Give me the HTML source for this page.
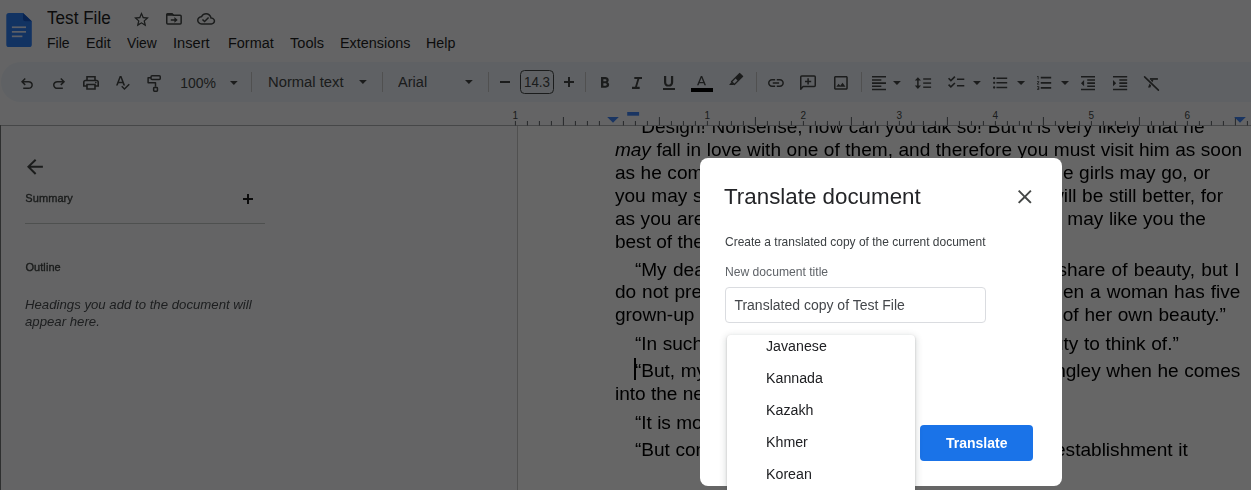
<!DOCTYPE html>
<html lang="en"><head><meta charset="utf-8"><title>Test File - Google Docs</title>
<style>
html,body{margin:0;padding:0}
body{width:1251px;height:490px;overflow:hidden;position:relative;background:#f9fbfd;font-family:"Liberation Sans",sans-serif;}
.t{position:absolute;white-space:pre;transform-origin:0 50%}
.ic{position:absolute;display:block;overflow:visible}
.abs{position:absolute}
.sep{position:absolute;width:1px;height:20px;top:72px;background:#c7c7c7}
.doc{position:absolute;color:#000;font-size:19.07px;line-height:23px;text-align:justify;text-align-last:justify;white-space:normal}
</style></head><body>

<svg class="abs" style="left:6px;top:13px;width:26px;height:34px" viewBox="0 0 26 34"><path d="M2.900 0H17l8.800 8.300V31.400a2.600 2.600 0 0 1-2.600 2.600H2.900A2.600 2.600 0 0 1 .3 31.400V2.600A2.600 2.600 0 0 1 2.900 0z" fill="#2f7ff6"/><path d="M17 0l8.800 8.300H19.300A2.300 2.300 0 0 1 17 6z" fill="#1659c8"/><rect x="5.900" y="13.400" width="14.100" height="1.700" fill="#e6eeff"/><rect x="5.900" y="18" width="14.100" height="1.700" fill="#e6eeff"/><rect x="5.900" y="22.500" width="10.500" height="1.700" fill="#e6eeff"/></svg>
<div class="t" style="left:46.50px;top:8px;font-size:17.5px;line-height:21px;color:#1f1f1f;font-weight:400;font-style:normal;transform:scaleX(0.978);">Test File</div>
<svg class="ic" style="left:134.30px;top:11.50px;width:15.00px;height:14.40px" viewBox="2 2 20 19" preserveAspectRatio="none" fill="#444746"><path d="M22 9.240l-7.190-.62L12 2 9.190 8.630 2 9.240l5.460 4.730L5.820 21 12 17.270 18.180 21l-1.630-7.030L22 9.240zM12 15.400l-3.760 2.270 1-4.280-3.320-2.880 4.380-.38L12 6.100l1.710 4.040 4.380.38-3.320 2.880 1 4.280L12 15.400z"/><path d="M12 4.200l2.250 5.300 5.750.5-4.350 3.800 1.300 5.600L12 16.400l-4.950 3 1.300-5.600L4 10l5.750-.5z" fill="none" stroke="#444746" stroke-width=".5"/></svg>
<svg class="ic" style="left:164px;top:11px;width:20px;height:16px" viewBox="164 11 20 16" fill="#444746"><path d="M166.750 23V14.750a1 1 0 0 1 1-1h4.300l1.600 1.600h6.500a1 1 0 0 1 1 1V23a1 1 0 0 1-1 1H167.750a1 1 0 0 1-1-1z" fill="none" stroke="#444746" stroke-width="1.500" stroke-linejoin="round"/><path d="M166.400 15.800V14.300a.8.800 0 0 1 .8-.8h5.100l2 2.300z"/><path d="M170.800 19.150h3.600v-2.100l3.300 2.850-3.300 2.850v-2.100h-3.600z"/></svg>
<svg class="ic" style="left:197.00px;top:13.00px;width:18.20px;height:11.70px" viewBox="0 4 24 16" preserveAspectRatio="none" fill="#444746"><path d="M19.350 10.040C18.670 6.590 15.640 4 12 4 9.110 4 6.600 5.640 5.350 8.040 2.340 8.360 0 10.910 0 14c0 3.310 2.690 6 6 6h13c2.760 0 5-2.240 5-5 0-2.640-2.050-4.780-4.650-4.960zM19 18H6c-2.210 0-4-1.790-4-4 0-2.050 1.530-3.760 3.560-3.970l1.070-.11.5-.95C8.080 7.140 9.940 6 12 6c2.620 0 4.880 1.860 5.390 4.430l.3 1.500 1.530.11c1.560.1 2.780 1.410 2.780 2.960 0 1.650-1.350 3-3 3zm-9-3.820l-2.090-2.090L6.500 13.500 10 17l6.010-6.010-1.410-1.410z"/></svg>
<div class="t" style="left:47.00px;top:35px;font-size:14px;line-height:17px;color:#1f1f1f;font-weight:400;font-style:normal;">File</div>
<div class="t" style="left:85.90px;top:35px;font-size:14px;line-height:17px;color:#1f1f1f;font-weight:400;font-style:normal;transform:scaleX(1.02);">Edit</div>
<div class="t" style="left:127.30px;top:35px;font-size:14px;line-height:17px;color:#1f1f1f;font-weight:400;font-style:normal;transform:scaleX(0.985);">View</div>
<div class="t" style="left:173.20px;top:35px;font-size:14px;line-height:17px;color:#1f1f1f;font-weight:400;font-style:normal;transform:scaleX(1.045);">Insert</div>
<div class="t" style="left:227.60px;top:35px;font-size:14px;line-height:17px;color:#1f1f1f;font-weight:400;font-style:normal;transform:scaleX(1.03);">Format</div>
<div class="t" style="left:289.70px;top:35px;font-size:14px;line-height:17px;color:#1f1f1f;font-weight:400;font-style:normal;transform:scaleX(1.04);">Tools</div>
<div class="t" style="left:339.90px;top:35px;font-size:14px;line-height:17px;color:#1f1f1f;font-weight:400;font-style:normal;transform:scaleX(1.028);">Extensions</div>
<div class="t" style="left:426.00px;top:35px;font-size:14px;line-height:17px;color:#1f1f1f;font-weight:400;font-style:normal;transform:scaleX(1.02);">Help</div>
<div class="abs" style="left:1px;top:62px;width:1300px;height:40px;border-radius:20px;background:#edf2fa"></div>
<svg class="ic" style="left:21.10px;top:77.90px;width:11.90px;height:11.10px" viewBox="4 4 16 15" preserveAspectRatio="none" fill="#444746"><path d="M7 19v-2h7.1q1.575 0 2.738-1T18 13.5 16.838 11 14.1 10H7.8l2.6 2.6L9 14 4 9l5-5 1.4 1.4L7.8 8h6.3q2.425 0 4.163 1.575T20 13.5t-1.737 3.925T14.1 19z"/></svg>
<svg class="ic" style="left:52.90px;top:77.90px;width:12.10px;height:11.10px" viewBox="4 4 16 15" preserveAspectRatio="none" fill="#444746"><path d="M9.9 19q-2.425 0-4.163-1.575T4 13.5t1.737-3.925T9.9 8h6.3l-2.6-2.6L15 4l5 5-5 5-1.4-1.4 2.6-2.6H9.9q-1.575 0-2.738 1T6 13.5 7.162 16 9.9 17H17v2z"/></svg>
<svg class="ic" style="left:82.90px;top:76.00px;width:16.00px;height:13.80px" viewBox="2 3 20 18" preserveAspectRatio="none" fill="#444746"><path d="M16 8V5H8v3H6V3h12v5zM18 12.500q.425 0 .713-.288T19 11.500t-.288-.712T18 10.500t-.712.288-.288.712.288.712.712.288M16 19v-4H8v4zm2 2H6v-4H2v-6q0-1.275.875-2.137T5 8h14q1.275 0 2.138.863T22 11v6h-4zm2-6v-4q0-.425-.288-.712T19 10H5q-.425 0-.712.288T4 11v4h2v-2h12v2z"/></svg>
<svg class="ic" style="left:116.00px;top:75.50px;width:13.80px;height:14.00px" viewBox="3 3 18.15 19" preserveAspectRatio="none" fill="#444746"><path d="M14.1 22l-4.25-4.25 1.4-1.4 2.85 2.85 5.65-5.65 1.4 1.4zM3 16L7.850 3h2.350L15.050 16h-2.300l-1.150-3.300H6.350L5.200 16zm4.050-5.200h3.900l-1.900-5.400h-.1z"/></svg>
<svg class="ic" style="left:146px;top:73px;width:17px;height:21px" viewBox="146 73 17 21" fill="#444746"><g fill="none" stroke="#444746" stroke-width="1.500" stroke-linejoin="round"><rect x="151.050" y="75.750" width="9.200" height="3.800" rx="1"/><path d="M151 77.650h-2.900v5.150h7.400v3.900"/><rect x="153.650" y="87.450" width="3.800" height="3.800" rx=".7"/></g></svg>
<div class="t" style="left:180.20px;top:75px;font-size:14px;line-height:17px;color:#444746;font-weight:400;font-style:normal;">100%</div>
<svg class="ic" style="left:230.10px;top:81.00px;width:7.70px;height:4.00px" viewBox="7 10 10 5" preserveAspectRatio="none" fill="#444746"><path d="M7 10l5 5 5-5z"/></svg>
<svg class="ic" style="left:359.10px;top:80.00px;width:7.80px;height:3.90px" viewBox="7 10 10 5" preserveAspectRatio="none" fill="#444746"><path d="M7 10l5 5 5-5z"/></svg>
<svg class="ic" style="left:465.20px;top:80.00px;width:7.80px;height:3.90px" viewBox="7 10 10 5" preserveAspectRatio="none" fill="#444746"><path d="M7 10l5 5 5-5z"/></svg>
<svg class="ic" style="left:893.20px;top:80.90px;width:7.90px;height:4.10px" viewBox="7 10 10 5" preserveAspectRatio="none" fill="#444746"><path d="M7 10l5 5 5-5z"/></svg>
<svg class="ic" style="left:973.00px;top:80.90px;width:7.90px;height:4.10px" viewBox="7 10 10 5" preserveAspectRatio="none" fill="#444746"><path d="M7 10l5 5 5-5z"/></svg>
<svg class="ic" style="left:1016.90px;top:80.90px;width:8.10px;height:4.10px" viewBox="7 10 10 5" preserveAspectRatio="none" fill="#444746"><path d="M7 10l5 5 5-5z"/></svg>
<svg class="ic" style="left:1060.90px;top:80.90px;width:8.00px;height:4.10px" viewBox="7 10 10 5" preserveAspectRatio="none" fill="#444746"><path d="M7 10l5 5 5-5z"/></svg>
<div class="sep" style="left:251.0px"></div>
<div class="sep" style="left:382.1px"></div>
<div class="sep" style="left:487.9px"></div>
<div class="sep" style="left:585.0px"></div>
<div class="sep" style="left:756.0px"></div>
<div class="sep" style="left:860.9px"></div>
<div class="t" style="left:267.60px;top:74px;font-size:14px;line-height:17px;color:#444746;font-weight:400;font-style:normal;transform:scaleX(1.055);">Normal text</div>
<div class="t" style="left:398.30px;top:74px;font-size:14px;line-height:17px;color:#444746;font-weight:400;font-style:normal;transform:scaleX(1.04);">Arial</div>
<div class="abs" style="left:500px;top:81.100px;width:10.100px;height:1.700px;background:#444746"></div>
<div class="abs" style="left:520px;top:70px;width:32px;height:22px;border:1px solid #444746;border-radius:4.500px"></div>
<div class="t" style="left:524.30px;top:74px;font-size:14px;line-height:17px;color:#444746;font-weight:400;font-style:normal;transform:scaleX(0.955);">14.3</div>
<div class="abs" style="left:563.900px;top:81.100px;width:10.100px;height:1.700px;background:#444746"></div>
<div class="abs" style="left:568.100px;top:76.900px;width:1.700px;height:10.100px;background:#444746"></div>
<svg class="ic" style="left:600.85px;top:77.00px;width:8.15px;height:10.80px" viewBox="6.8 5 10.4 14" preserveAspectRatio="none" fill="#444746"><path d="M6.800 19V5h5.525q1.625 0 3 1T16.700 8.775q0 1.275-.575 1.963t-1.075.987q.625.275 1.388 1.025T17.200 15q0 2.225-1.625 3.113T12.525 19zm3.025-2.800h2.600q1.200 0 1.463-.612t.262-.888-.262-.887-1.538-.613H9.825zm0-5.700h2.325q.825 0 1.200-.425t.375-.950q0-.600-.425-.975t-1.100-.375H9.825z"/></svg>
<svg class="ic" style="left:632.00px;top:77.00px;width:10.00px;height:11.90px" viewBox="5 5 13 14" preserveAspectRatio="none" fill="#444746"><path d="M5 19v-2.500h4l3-9H8V5h10v2.500h-3.500l-3 9H15V19z"/></svg>
<svg class="ic" style="left:664.20px;top:76.10px;width:9.20px;height:10.60px" viewBox="6.675 3 10.65 14" preserveAspectRatio="none" fill="#444746"><path d="M12 17q-2.525 0-3.925-1.575T6.675 11.250V3H9.250v8.400q0 1.400.7 2.275T12 14.550t2.050-.875.700-2.275V3h2.575v8.250q0 2.600-1.400 4.175T12 17z"/></svg>
<div class="abs" style="left:663px;top:88.400px;width:11.800px;height:1.400px;background:#444746"></div>
<svg class="ic" style="left:697.40px;top:75.50px;width:9.00px;height:9.30px" viewBox="5.5 3 12.99 14" preserveAspectRatio="none" fill="#444746"><path d="M11 3L5.500 17h2.250l1.120-3h6.250l1.120 3h2.250L13 3h-2zm-1.380 9L12 5.670 14.380 12H9.620z"/></svg>
<div class="abs" style="left:691px;top:88px;width:22px;height:4px;background:#000"></div>
<svg class="ic" style="left:727px;top:71px;width:18px;height:16px" viewBox="727 71 18 16" fill="#444746"><g transform="translate(737.300 78.800) rotate(-45)"><path fill-rule="evenodd" d="M-6.200 -2.700H5.500a.5.500 0 0 1 .5.500v4.400a.5.500 0 0 1-.5.500H-6.200a.5.500 0 0 1-.5-.5v-4.400a.5.500 0 0 1 .5-.5zM-5.400 -1.400v2.800h4.300v-2.800z"/></g><path d="M729.100 84.900l2.300-2.900 3.100 2.900z"/></svg>
<svg class="ic" style="left:768.10px;top:78.90px;width:15.90px;height:8.00px" viewBox="2 7 20 10" preserveAspectRatio="none" fill="#444746"><path d="M3.900 12c0-1.710 1.390-3.100 3.100-3.100h4V7H7c-2.760 0-5 2.240-5 5s2.240 5 5 5h4v-1.900H7c-1.710 0-3.100-1.390-3.100-3.100zM8 13h8v-2H8v2zm9-6h-4v1.900h4c1.710 0 3.100 1.390 3.100 3.100s-1.390 3.100-3.100 3.100h-4V17h4c2.760 0 5-2.240 5-5s-2.240-5-5-5z"/></svg>
<svg class="ic" style="left:799px;top:74px;width:18px;height:17px" viewBox="799 74 18 17" fill="#444746"><path d="M800.750 89.300V76.950a1 1 0 0 1 1-1h12.500a1 1 0 0 1 1 1v8.600a1 1 0 0 1-1 1H803.100z" fill="none" stroke="#444746" stroke-width="1.500" stroke-linejoin="round"/><path d="M805 80.650h2.350V78.300h1.500v2.350h2.350v1.500h-2.350v2.350h-1.500v-2.350H805z"/></svg>
<svg class="ic" style="left:834.10px;top:76.10px;width:13.80px;height:13.70px" viewBox="3 3 18 18" preserveAspectRatio="none" fill="#444746"><path d="M19 5v14H5V5h14m0-2H5c-1.100 0-2 .9-2 2v14c0 1.100.9 2 2 2h14c1.100 0 2-.9 2-2V5c0-1.100-.9-2-2-2zm-4.860 8.860l-3 3.870L9 13.140 6 17h12l-3.860-5.140z"/></svg>
<svg class="ic" style="left:872.00px;top:75.80px;width:14.00px;height:14.30px" viewBox="3 3 18 18" preserveAspectRatio="none" fill="#444746"><path d="M15 15H3v2h12v-2zm0-8H3v2h12V7zM3 13h18v-2H3v2zm0 8h18v-2H3v2zM3 3v2h18V3H3z"/></svg>
<svg class="ic" style="left:914px;top:76px;width:18px;height:14px" viewBox="914 76 18 14" fill="#444746"><path d="M917.900 77.200l3.100 3.300h-2.350v5.100h2.350l-3.100 3.300-3.100-3.300h2.350v-5.100h-2.350z"/><rect x="923.200" y="78.300" width="7.900" height="1.400"/><rect x="923.200" y="82.400" width="7.900" height="1.400"/><rect x="923.200" y="86.500" width="7.900" height="1.400"/></svg>
<svg class="ic" style="left:947.80px;top:76.30px;width:16.30px;height:12.10px" viewBox="2 3.93 20 15.07" preserveAspectRatio="none" fill="#444746"><path d="M22 7h-9v2h9V7zm0 8h-9v2h9v-2zM5.540 11L2 7.460l1.410-1.410 2.120 2.120 4.240-4.240 1.410 1.410L5.540 11zm0 8L2 15.460l1.410-1.410 2.120 2.120 4.240-4.240 1.410 1.410L5.540 19z"/></svg>
<svg class="ic" style="left:992.80px;top:77.20px;width:14.20px;height:11.70px" viewBox="2.5 4.5 18.5 15" preserveAspectRatio="none" fill="#444746"><path d="M4 10.500c-.83 0-1.500.67-1.500 1.500s.67 1.500 1.500 1.500 1.500-.67 1.500-1.500-.67-1.500-1.500-1.500zm0-6c-.83 0-1.500.67-1.500 1.500S3.170 7.500 4 7.500 5.500 6.830 5.500 6 4.830 4.500 4 4.500zm0 12c-.83 0-1.500.68-1.500 1.500s.68 1.500 1.500 1.500 1.500-.68 1.500-1.500-.67-1.500-1.500-1.500zM7 19h14v-2H7v2zm0-6h14v-2H7v2zm0-8v2h14V5H7z"/></svg>
<svg class="ic" style="left:1036.80px;top:76.10px;width:14.20px;height:13.70px" viewBox="2 4 19 16" preserveAspectRatio="none" fill="#444746"><path d="M2 17h2v.5H3v1h1v.5H2v1h3v-4H2v1zm1-9h1V4H2v1h1v3zm-1 3h1.800L2 13.100v.9h3v-1H3.200L5 10.900V10H2v1zm5-6v2h14V5H7zm0 14h14v-2H7v2zm0-6h14v-2H7v2z"/></svg>
<svg class="ic" style="left:1081.00px;top:75.80px;width:14.00px;height:14.30px" viewBox="3 3 18 18" preserveAspectRatio="none" fill="#444746"><path d="M11 17h10v-2H11v2zm-8-5l4 4V8l-4 4zm0 9h18v-2H3v2zM3 3v2h18V3H3zm8 6h10V7H11v2zm0 4h10v-2H11v2z"/></svg>
<svg class="ic" style="left:1112.90px;top:75.80px;width:14.20px;height:14.30px" viewBox="3 3 18 18" preserveAspectRatio="none" fill="#444746"><path d="M3 21h18v-2H3v2zM3 8v8l4-4-4-4zm8 9h10v-2H11v2zM3 3v2h18V3H3zm8 6h10V7H11v2zm0 4h10v-2H11v2z"/></svg>
<svg class="ic" style="left:1143px;top:75px;width:18px;height:17px" viewBox="1143 75 18 17" fill="#444746"><rect x="1149.900" y="78.100" width="8" height="1.700"/><path d="M1151.200 79.800h2.300l-3.200 7.800h-2.300z"/><path d="M1149.200 81.200l4 3.900" fill="none" stroke="#edf2fa" stroke-width="3.200"/><path d="M1144.600 76.800l13.800 13.300" fill="none" stroke="#444746" stroke-width="1.600" stroke-linecap="round"/></svg>
<div class="abs" style="left:517px;top:125px;width:800px;height:400px;background:#fff;border-left:1px solid #c7c7c7"></div>
<div class="abs" style="left:0;top:0;width:1251px;height:490px;will-change:transform">
<div class="doc" style="left:634.9px;top:115px;width:569.7px">“Design! Nonsense, how can you talk so! But it is very likely that he</div>
<div class="doc" style="left:614.9px;top:138px;width:627.3px"><i>may</i> fall in love with one of them, and therefore you must visit him as soon</div>
<div class="doc" style="left:614.9px;top:161px;width:595.3px">as he comes.” “I see no occasion for that. You and the girls may go, or</div>
<div class="doc" style="left:614.9px;top:184px;width:608.1px">you may send them by themselves, which perhaps will be still better, for</div>
<div class="doc" style="left:614.9px;top:207px;width:591.0px">as you are as handsome as any of them, Mr. Bingley may like you the</div>
<div class="doc" style="left:614.9px;top:230px;white-space:nowrap;text-align:left;text-align-last:left">best of the party.”</div>
<div class="doc" style="left:634.9px;top:258px;width:604.6px">“My dear, you flatter me. I certainly have had my share of beauty, but I</div>
<div class="doc" style="left:614.9px;top:280px;width:625.5px">do not pretend to be anything extraordinary now. When a woman has five</div>
<div class="doc" style="left:614.9px;top:303px;width:611.1px">grown-up daughters, she ought to give over thinking of her own beauty.”</div>
<div class="doc" style="left:634.9px;top:332px;width:543.9px">“In such cases, a woman has not often much beauty to think of.”</div>
<div class="doc" style="left:634.9px;top:359px;width:605.5px">“But, my dear, you must indeed go and see Mr. Bingley when he comes</div>
<div class="doc" style="left:614.9px;top:382px;white-space:nowrap;text-align:left;text-align-last:left">into the neighbourhood.”</div>
<div class="doc" style="left:634.9px;top:411px;white-space:nowrap;text-align:left;text-align-last:left">“It is more than I engage for, I assure you.”</div>
<div class="doc" style="left:634.9px;top:438px;width:552.9px">“But consider your daughters. Only think what an establishment it</div>
</div>
<div class="abs" style="left:634px;top:358px;width:2px;height:22px;background:#000"></div>
<div class="abs" style="left:0;top:102px;width:1251px;height:23px;background:#f9fbfd"></div>
<div class="abs" style="left:0;top:125px;width:1251px;height:1px;background:#aeb1b3"></div>
<svg class="abs" style="left:0;top:102px;width:1251px;height:24px" viewBox="0 0 1251 24"><text x="515.4" y="16.500" font-size="10" text-anchor="middle" fill="#444746" font-family="Liberation Sans, sans-serif">1</text><rect x="514.9" y="19" width="1" height="4.500" fill="#5f6368"/><rect x="526.9" y="19" width="1" height="4.500" fill="#5f6368"/><rect x="538.9" y="19" width="1" height="4.500" fill="#5f6368"/><rect x="550.9" y="19" width="1" height="4.500" fill="#5f6368"/><rect x="562.9" y="15" width="1" height="8.500" fill="#5f6368"/><rect x="574.9" y="19" width="1" height="4.500" fill="#5f6368"/><rect x="586.9" y="19" width="1" height="4.500" fill="#5f6368"/><rect x="598.9" y="19" width="1" height="4.500" fill="#5f6368"/><rect x="622.9" y="19" width="1" height="4.500" fill="#5f6368"/><rect x="634.9" y="19" width="1" height="4.500" fill="#5f6368"/><rect x="646.9" y="19" width="1" height="4.500" fill="#5f6368"/><rect x="658.9" y="15" width="1" height="8.500" fill="#5f6368"/><rect x="670.9" y="19" width="1" height="4.500" fill="#5f6368"/><rect x="682.9" y="19" width="1" height="4.500" fill="#5f6368"/><rect x="694.9" y="19" width="1" height="4.500" fill="#5f6368"/><text x="707.4" y="16.500" font-size="10" text-anchor="middle" fill="#444746" font-family="Liberation Sans, sans-serif">1</text><rect x="706.9" y="19" width="1" height="4.500" fill="#5f6368"/><rect x="718.9" y="19" width="1" height="4.500" fill="#5f6368"/><rect x="730.9" y="19" width="1" height="4.500" fill="#5f6368"/><rect x="742.9" y="19" width="1" height="4.500" fill="#5f6368"/><rect x="754.9" y="15" width="1" height="8.500" fill="#5f6368"/><rect x="766.9" y="19" width="1" height="4.500" fill="#5f6368"/><rect x="778.9" y="19" width="1" height="4.500" fill="#5f6368"/><rect x="790.9" y="19" width="1" height="4.500" fill="#5f6368"/><text x="803.4" y="16.500" font-size="10" text-anchor="middle" fill="#444746" font-family="Liberation Sans, sans-serif">2</text><rect x="802.9" y="19" width="1" height="4.500" fill="#5f6368"/><rect x="814.9" y="19" width="1" height="4.500" fill="#5f6368"/><rect x="826.9" y="19" width="1" height="4.500" fill="#5f6368"/><rect x="838.9" y="19" width="1" height="4.500" fill="#5f6368"/><rect x="850.9" y="15" width="1" height="8.500" fill="#5f6368"/><rect x="862.9" y="19" width="1" height="4.500" fill="#5f6368"/><rect x="874.9" y="19" width="1" height="4.500" fill="#5f6368"/><rect x="886.9" y="19" width="1" height="4.500" fill="#5f6368"/><text x="899.4" y="16.500" font-size="10" text-anchor="middle" fill="#444746" font-family="Liberation Sans, sans-serif">3</text><rect x="898.9" y="19" width="1" height="4.500" fill="#5f6368"/><rect x="910.9" y="19" width="1" height="4.500" fill="#5f6368"/><rect x="922.9" y="19" width="1" height="4.500" fill="#5f6368"/><rect x="934.9" y="19" width="1" height="4.500" fill="#5f6368"/><rect x="946.9" y="15" width="1" height="8.500" fill="#5f6368"/><rect x="958.9" y="19" width="1" height="4.500" fill="#5f6368"/><rect x="970.9" y="19" width="1" height="4.500" fill="#5f6368"/><rect x="982.9" y="19" width="1" height="4.500" fill="#5f6368"/><text x="995.4" y="16.500" font-size="10" text-anchor="middle" fill="#444746" font-family="Liberation Sans, sans-serif">4</text><rect x="994.9" y="19" width="1" height="4.500" fill="#5f6368"/><rect x="1006.9" y="19" width="1" height="4.500" fill="#5f6368"/><rect x="1018.9" y="19" width="1" height="4.500" fill="#5f6368"/><rect x="1030.9" y="19" width="1" height="4.500" fill="#5f6368"/><rect x="1042.9" y="15" width="1" height="8.500" fill="#5f6368"/><rect x="1054.9" y="19" width="1" height="4.500" fill="#5f6368"/><rect x="1066.9" y="19" width="1" height="4.500" fill="#5f6368"/><rect x="1078.9" y="19" width="1" height="4.500" fill="#5f6368"/><text x="1091.4" y="16.500" font-size="10" text-anchor="middle" fill="#444746" font-family="Liberation Sans, sans-serif">5</text><rect x="1090.9" y="19" width="1" height="4.500" fill="#5f6368"/><rect x="1102.9" y="19" width="1" height="4.500" fill="#5f6368"/><rect x="1114.9" y="19" width="1" height="4.500" fill="#5f6368"/><rect x="1126.9" y="19" width="1" height="4.500" fill="#5f6368"/><rect x="1138.9" y="15" width="1" height="8.500" fill="#5f6368"/><rect x="1150.9" y="19" width="1" height="4.500" fill="#5f6368"/><rect x="1162.9" y="19" width="1" height="4.500" fill="#5f6368"/><rect x="1174.9" y="19" width="1" height="4.500" fill="#5f6368"/><text x="1187.4" y="16.500" font-size="10" text-anchor="middle" fill="#444746" font-family="Liberation Sans, sans-serif">6</text><rect x="1186.9" y="19" width="1" height="4.500" fill="#5f6368"/><rect x="1198.9" y="19" width="1" height="4.500" fill="#5f6368"/><rect x="1210.9" y="19" width="1" height="4.500" fill="#5f6368"/><rect x="1222.9" y="19" width="1" height="4.500" fill="#5f6368"/><rect x="1234.9" y="15" width="1" height="8.500" fill="#5f6368"/><rect x="1246.9" y="19" width="1" height="4.500" fill="#5f6368"/><path d="M607.200 14.900h11.600l-5.800 5.800z" fill="#4285f4"/><rect x="627.200" y="10" width="11.900" height="3.700" fill="#4285f4"/><path d="M1234.200 14.900h11.600l-5.800 5.800z" fill="#4285f4"/></svg>
<div class="abs" style="left:0;top:125px;width:1px;height:400px;background:#747775"></div>
<svg class="ic" style="left:27.20px;top:159.30px;width:15.90px;height:15.70px" viewBox="4 4 16 16" preserveAspectRatio="none" fill="#444746"><path d="M20 11H7.830l5.590-5.590L12 4l-8 8 8 8 1.410-1.410L7.830 13H20v-2z"/></svg>
<div class="t" style="left:25.30px;top:192px;font-size:11px;line-height:13px;color:#444746;font-weight:400;font-style:normal;-webkit-text-stroke:.35px currentColor;letter-spacing:.08px;">Summary</div>
<div class="abs" style="left:242.900px;top:198px;width:10.200px;height:2px;background:#1f1f1f"></div>
<div class="abs" style="left:247px;top:193.900px;width:2px;height:10.200px;background:#1f1f1f"></div>
<div class="abs" style="left:25px;top:223px;width:240px;height:1px;background:#c4c7c5"></div>
<div class="t" style="left:25.40px;top:261px;font-size:11px;line-height:13px;color:#444746;font-weight:400;font-style:normal;-webkit-text-stroke:.35px currentColor;letter-spacing:.08px;">Outline</div>
<div class="t" style="left:25.40px;top:297px;font-size:13px;line-height:16px;color:#4a4d50;font-weight:400;font-style:italic;transform:scaleX(1.015);">Headings you add to the document will</div>
<div class="t" style="left:25.40px;top:314px;font-size:13px;line-height:16px;color:#4a4d50;font-weight:400;font-style:italic;transform:scaleX(1.015);">appear here.</div>
<div class="abs" style="left:0;top:0;width:1251px;height:490px;background:rgba(0,0,0,0.6)"></div>
<div class="abs" style="left:700px;top:158px;width:362px;height:328px;border-radius:8px;background:#fff"></div>
<div class="t" style="left:723.60px;top:184px;font-size:22px;line-height:26px;color:#242528;font-weight:400;font-style:normal;transform:scaleX(1.016);">Translate document</div>
<svg class="ic" style="left:1018.20px;top:190.00px;width:13.60px;height:13.60px" viewBox="5 5 14 14" preserveAspectRatio="none" fill="#444746"><path d="M19 6.410L17.590 5 12 10.590 6.410 5 5 6.410 10.590 12 5 17.590 6.410 19 12 13.410 17.590 19 19 17.590 13.410 12z"/></svg>
<div class="t" style="left:725.10px;top:234px;font-size:13px;line-height:16px;color:#3c4043;font-weight:400;font-style:normal;transform:scaleX(0.922);">Create a translated copy of the current document</div>
<div class="t" style="left:725.10px;top:265px;font-size:12px;line-height:14px;color:#5f6368;font-weight:400;font-style:normal;transform:scaleX(1.01);">New document title</div>
<div class="abs" style="left:725px;top:287px;width:259px;height:34px;border:1px solid #dadce0;border-radius:4px;background:#fff"></div>
<div class="t" style="left:734.40px;top:297px;font-size:14px;line-height:17px;color:#44474b;font-weight:400;font-style:normal;">Translated copy of Test File</div>
<div class="abs" style="left:920px;top:425px;width:113px;height:36px;border-radius:4px;background:#1a73e8"></div>
<div class="t" style="left:946.00px;top:435px;font-size:14px;line-height:17px;color:#fff;font-weight:700;font-style:normal;">Translate</div>
<div class="abs" style="left:727px;top:335px;width:188px;height:200px;border-radius:4px;background:#fff;box-shadow:0 1px 2px rgba(60,64,67,.3),0 2px 6px 2px rgba(60,64,67,.15)"></div>
<div class="t" style="left:766.20px;top:338px;font-size:14px;line-height:17px;color:#202124;font-weight:400;font-style:normal;transform:scaleX(1.015);">Javanese</div>
<div class="t" style="left:766.20px;top:370px;font-size:14px;line-height:17px;color:#202124;font-weight:400;font-style:normal;transform:scaleX(1.015);">Kannada</div>
<div class="t" style="left:766.20px;top:402px;font-size:14px;line-height:17px;color:#202124;font-weight:400;font-style:normal;transform:scaleX(1.015);">Kazakh</div>
<div class="t" style="left:766.20px;top:434px;font-size:14px;line-height:17px;color:#202124;font-weight:400;font-style:normal;transform:scaleX(1.015);">Khmer</div>
<div class="t" style="left:766.20px;top:466px;font-size:14px;line-height:17px;color:#202124;font-weight:400;font-style:normal;transform:scaleX(1.015);">Korean</div>
</body></html>
